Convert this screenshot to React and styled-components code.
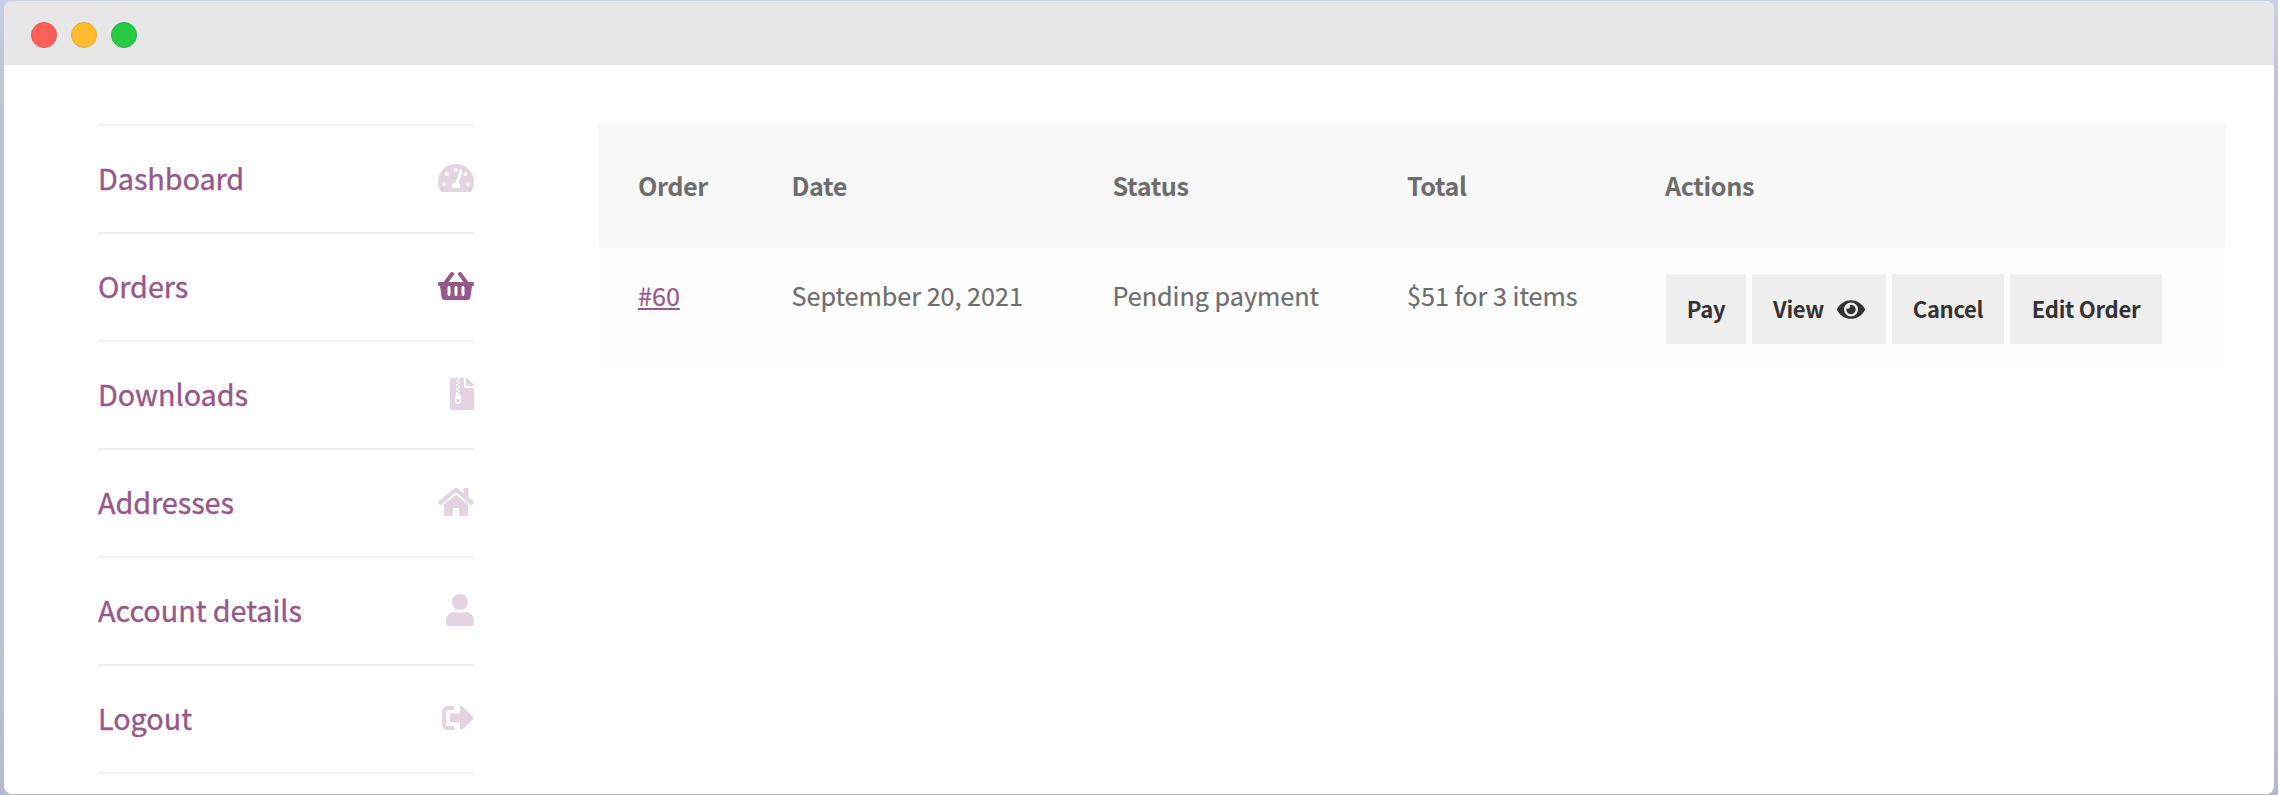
import React from "react";
import styled, { createGlobalStyle } from "styled-components";
import {
  FaTachometerAlt,
  FaShoppingBasket,
  FaFileArchive,
  FaHome,
  FaUser,
  FaSignOutAlt,
  FaEye,
} from "react-icons/fa";

const GlobalStyle = createGlobalStyle`
  * { box-sizing: border-box; }
  body {
    margin: 0;
    font-family: "Noto Sans CJK JP", "Noto Sans", sans-serif;
    color: #6d6d6d;
    -webkit-font-smoothing: antialiased;
  }
`;

const Backdrop = styled.div`
  height: 795px;
  padding: 1px 4px;
  overflow: hidden;
  background: linear-gradient(180deg, #c9cfe5 0, #c2c8dc 50px, #bdc4d8 110px, #bdc4d8 650px, #b4bace 100%);
`;

const Window = styled.div`
  display: flex;
  flex-direction: column;
  height: 793px;
  border-radius: 8px;
  overflow: hidden;
  background: #fff;
`;

const TitleBar = styled.header`
  display: flex;
  align-items: center;
  gap: 14px;
  flex: none;
  height: 64px;
  padding: 4px 0 0 27px;
  background: #e7e7e7;
`;

const Light = styled.span`
  width: 26px;
  height: 26px;
  border-radius: 50%;
  background: ${(p) => p.$fill};
  border: 1px solid ${(p) => p.$edge};
`;

const Page = styled.main`
  display: flex;
  flex: 1;
  align-items: flex-start;
  gap: 124px;
  padding: 59px 48px 0 94px;
`;

const Nav = styled.nav`
  flex: none;
  width: 376px;
  border-top: 2px solid #f1f1f1;
`;

const NavItem = styled.a`
  display: flex;
  align-items: center;
  justify-content: space-between;
  height: 108px;
  padding-bottom: 2px;
  border-bottom: 2px solid #f1f1f1;
  color: #96588a;
  font-size: 28.8px;
  letter-spacing: -0.06px;
  line-height: 52px;
  text-decoration: none;
  -webkit-text-stroke: 0.35px currentColor;

  svg {
    flex: none;
    width: ${(p) => p.$iconWidth}px;
    height: 32px;
    opacity: ${(p) => (p.$active ? 1 : 0.25)};
  }
`;

const Table = styled.table`
  flex: none;
  width: 1628px;
  table-layout: fixed;
  border-collapse: collapse;
  font-size: 25.2px;
  text-align: left;
`;

const HeadCell = styled.th`
  width: ${(p) => p.$width}px;
  height: 122px;
  padding: 0 0 0 40px;
  background: #f8f8f8;
  font-weight: 700;
  letter-spacing: -0.4px;
  line-height: 48px;
  vertical-align: middle;
`;

const Cell = styled.td`
  height: 126px;
  padding: 25px 0 0 40px;
  background: #fdfdfd;
  line-height: 48px;
  vertical-align: top;
  white-space: nowrap;
  letter-spacing: -0.03px;
  -webkit-text-stroke: 0.2px currentColor;
`;

const OrderLink = styled.a`
  color: #96588a;
  text-decoration: underline;
  text-decoration-thickness: 2px;
  text-underline-offset: 2px;
`;

const ActionCell = styled(Cell)`
  padding: 28px 0 0 41px;
  -webkit-text-stroke: 0;
`;

const Actions = styled.div`
  display: flex;
  gap: 6px;
`;

const ActionButton = styled.a`
  display: flex;
  align-items: center;
  justify-content: center;
  gap: 13px;
  width: ${(p) => p.$width}px;
  height: 70px;
  padding-bottom: 2px;
  background: #eee;
  color: #333;
  font-size: 22.05px;
  font-weight: 700;
  letter-spacing: -0.3px;
  line-height: 36px;

  svg {
    width: 28px;
    height: 25px;
    margin-top: 2px;
  }
`;

const NAV = [
  { label: "Dashboard", Icon: FaTachometerAlt, width: 36 },
  { label: "Orders", Icon: FaShoppingBasket, width: 36, active: true },
  { label: "Downloads", Icon: FaFileArchive, width: 24 },
  { label: "Addresses", Icon: FaHome, width: 36 },
  { label: "Account details", Icon: FaUser, width: 28 },
  { label: "Logout", Icon: FaSignOutAlt, width: 32 },
];

const COLUMNS = [
  ["Order", 153.5],
  ["Date", 321],
  ["Status", 294.5],
  ["Total", 258],
  ["Actions", 601],
];

export default function App() {
  return (
    <Backdrop>
      <GlobalStyle />
      <Window>
        <TitleBar>
          <Light $fill="#ff5f57" $edge="#f0524c" />
          <Light $fill="#ffbd2e" $edge="#e9a63f" />
          <Light $fill="#28ca41" $edge="#1fb04a" />
        </TitleBar>
        <Page>
          <Nav>
            {NAV.map(({ label, Icon, width, active }) => (
              <NavItem key={label} $iconWidth={width} $active={active}>
                {label}
                <Icon />
              </NavItem>
            ))}
          </Nav>
          <Table>
            <thead>
              <tr>
                {COLUMNS.map(([name, width]) => (
                  <HeadCell key={name} $width={width}>{name}</HeadCell>
                ))}
              </tr>
            </thead>
            <tbody>
              <tr>
                <Cell><OrderLink>#60</OrderLink></Cell>
                <Cell>September 20, 2021</Cell>
                <Cell>Pending payment</Cell>
                <Cell>$51 for 3 items</Cell>
                <ActionCell>
                  <Actions>
                    <ActionButton $width={80}>Pay</ActionButton>
                    <ActionButton $width={134}>View<FaEye /></ActionButton>
                    <ActionButton $width={112}>Cancel</ActionButton>
                    <ActionButton $width={152}>Edit Order</ActionButton>
                  </Actions>
                </ActionCell>
              </tr>
            </tbody>
          </Table>
        </Page>
      </Window>
    </Backdrop>
  );
}
